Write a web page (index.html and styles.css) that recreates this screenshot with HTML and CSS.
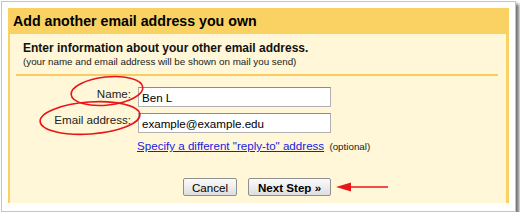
FILE: index.html
```html
<!DOCTYPE html>
<html lang="en">

<head>
    <meta charset="UTF-8">
    <title>Add another email address</title>
    <link rel="stylesheet" href="styles.css">
</head>

<body>
    <div class="frame">
        <div class="panel">
            <div class="panelHead">Add another email address you own</div>
            <div class="panelBody">
                <div class="intro">
                    <h2>Enter information about your other email address.</h2>
                    <p>(your name and email address will be shown on mail you send)</p>
                </div>
                <div class="sep"></div>
                <div class="form">
                    <label>Name:</label>
                    <input type="text" value="Ben L">
                    <label>Email address:</label>
                    <input type="text" value="example@example.edu">
                    <div class="replyRow">
                        <a href="javascript:;">Specify a different "reply-to" address</a>
                        <span class="optional">(optional)</span>
                    </div>
                </div>
                <div class="buttons">
                    <button>Cancel</button>
                    <button class="next">Next Step &raquo;</button>
                </div>
            </div>
        </div>
    </div>
    <!-- red marks drawn over the screenshot -->
    <svg class="marks" width="520" height="216" viewBox="0 0 520 216">
        <ellipse cx="107" cy="91" rx="36" ry="14" transform="rotate(-6 107 91)" />
        <ellipse cx="90" cy="118" rx="50" ry="16" transform="rotate(-4 90 118)" />
        <line x1="348" y1="187" x2="388" y2="187" />
        <polygon points="336,187 351,182.5 351,191.5" />
    </svg>
</body>

</html>
```

FILE: styles.css
```css
body {
    margin: 0;
    font-family: "Liberation Sans", Arial, sans-serif;
    background: #fff;
}

.frame {
    margin: 1px 0 0 1px;
    width: 515px;
    height: 211px;
    box-sizing: border-box;
    border: 1px solid #c4c4c4;
    padding: 6px;
    background: #fff;
    box-shadow: 3px 3px 3px rgba(0, 0, 0, 0.55);
}

.panel {
    width: 501px;
}

.panelHead {
    height: 26px;
    line-height: 27px;
    padding-left: 5px;
    background: #fad163;
    font-size: 14.2px;
    font-weight: bold;
    color: #000;
}

.panelBody {
    height: 169px;
    box-sizing: border-box;
    background: #fff7d7;
    border-left: 2px solid #fad163;
    border-right: 3px solid #fad163;
    padding: 7px 8px 0 6px;
    overflow: hidden;
}

.intro {
    padding-left: 7px;
}

.intro h2 {
    margin: 0;
    font-size: 12px;
    line-height: 14px;
    font-weight: bold;
    color: #111;
}

.intro p {
    margin: 0;
    font-size: 9.8px;
    line-height: 13px;
    color: #222;
}

.sep {
    margin-top: 6px;
    height: 2px;
    background: #f8cd5e;
}

.form {
    margin-top: 11px;
    display: grid;
    grid-template-columns: 115px 193px;
    column-gap: 7px;
    row-gap: 6px;
    font-size: 11.6px;
}

.form label {
    text-align: right;
    line-height: 14px;
    color: #222;
}

.form input {
    height: 20px;
    box-sizing: border-box;
    margin: 0;
    padding: 1px 3px 0;
    border: 1px solid #b0b0b0;
    border-top-color: #8c8c8c;
    background: #fff;
    font-family: "Liberation Sans", Arial, sans-serif;
    font-size: 11.6px;
    color: #000;
}

.replyRow {
    grid-column: 2;
    margin-left: -1px;
    line-height: 14px;
    white-space: nowrap;
}

.replyRow a {
    color: #1a1ae0;
    text-decoration: underline;
}

.optional {
    margin-left: 2px;
    font-size: 9.8px;
    color: #222;
}

.buttons {
    margin-top: 24px;
    display: flex;
    justify-content: center;
    gap: 11px;
}

.buttons button {
    height: 18px;
    margin: 0;
    padding: 0 8px;
    border: 1px solid #8f8f8f;
    border-radius: 2px;
    background: linear-gradient(#fbfbfb, #dedede);
    font-family: "Liberation Sans", Arial, sans-serif;
    font-size: 11.6px;
    color: #000;
}

.buttons .next {
    font-weight: bold;
    padding: 0 9px;
}

.marks {
    position: absolute;
    left: 0;
    top: 0;
    pointer-events: none;
}

.marks ellipse,
.marks line {
    fill: none;
    stroke: #e8161a;
    stroke-width: 1.6;
}

.marks polygon {
    fill: #e8161a;
}
```
